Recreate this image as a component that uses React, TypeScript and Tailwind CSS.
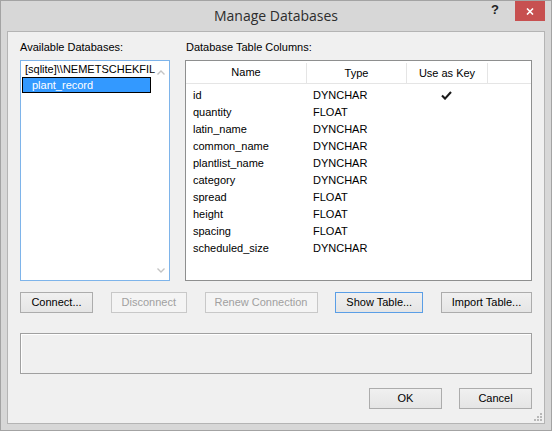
import React from 'react';

type Column = { name: string; type: string; key?: boolean };

const columns: Column[] = [
  { name: 'id', type: 'DYNCHAR', key: true },
  { name: 'quantity', type: 'FLOAT' },
  { name: 'latin_name', type: 'DYNCHAR' },
  { name: 'common_name', type: 'DYNCHAR' },
  { name: 'plantlist_name', type: 'DYNCHAR' },
  { name: 'category', type: 'DYNCHAR' },
  { name: 'spread', type: 'FLOAT' },
  { name: 'height', type: 'FLOAT' },
  { name: 'spacing', type: 'FLOAT' },
  { name: 'scheduled_size', type: 'DYNCHAR' },
];

const Chevron = ({ down }: { down?: boolean }) => (
  <svg width="8" height="5" viewBox="0 0 8 5" className={down ? 'rotate-180' : ''}>
    <path d="M0.5 4.5 L4 1 L7.5 4.5" fill="none" stroke="#c4c4c4" strokeWidth="1.4" />
  </svg>
);

const Check = () => (
  <svg width="11" height="9" viewBox="0 0 11 9">
    <path d="M1 4.6 L4 7.6 L10 1" fill="none" stroke="#1a1a1a" strokeWidth="2.1" />
  </svg>
);

const SizeGrip = () => (
  <svg width="9" height="9" viewBox="0 0 9 9">
    <rect x="6" y="0" width="2" height="2" fill="#b8b8b8" />
    <rect x="3" y="3" width="2" height="2" fill="#b8b8b8" />
    <rect x="6" y="3" width="2" height="2" fill="#b8b8b8" />
    <rect x="0" y="6" width="2" height="2" fill="#b8b8b8" />
    <rect x="3" y="6" width="2" height="2" fill="#b8b8b8" />
    <rect x="6" y="6" width="2" height="2" fill="#b8b8b8" />
  </svg>
);

const Button = ({
  label,
  width,
  disabled,
  focused,
}: {
  label: string;
  width: string;
  disabled?: boolean;
  focused?: boolean;
}) => {
  let cls = 'border-[#acacac] bg-gradient-to-b from-[#f0f0f0] to-[#e5e5e5] text-black';
  if (disabled) cls = 'border-[#c8c8c8] bg-[#f4f4f4] text-[#a0a0a0]';
  if (focused) cls = 'border-[#5a9ee6] bg-gradient-to-b from-[#f0f0f0] to-[#e5e5e5] text-black';
  return (
    <div className={`${width} h-[21px] border flex items-center justify-center ${cls}`}>
      {label}
    </div>
  );
};

const App = () => {
  return (
    <div className="w-[552px] h-[431px] bg-[#d7d7d7] border border-[#a3a3a3] flex flex-col font-['Liberation_Sans',Arial,sans-serif] text-[11px] text-black">
      {/* title bar */}
      <div className="h-[30px] grid grid-cols-[1fr_auto_1fr]">
        <div />
        <div className="pt-[4px] font-['Open_Sans',sans-serif] text-[14px] text-[#2d2d2d]">Manage Databases</div>
        <div className="flex justify-end items-start pr-[6px]">
          <div className="mt-[2px] mr-[16px] font-['Liberation_Sans',sans-serif] font-bold text-[13px] text-[#222] leading-none">?</div>
          <div className="w-[30px] h-[20px] bg-[#c75050] flex items-center justify-center">
            <svg width="8" height="7" viewBox="0 0 8 7">
              <path d="M1 0.5 L7 6.5 M7 0.5 L1 6.5" stroke="#fff" strokeWidth="1.6" />
            </svg>
          </div>
        </div>
      </div>

      {/* client area */}
      <div className="relative mx-[6px] mb-[6px] flex-1 border border-[#b4b4b4] bg-[#f0f0f0] px-[12px] pt-[9px] flex flex-col">
        <div className="grid grid-cols-[150px_347px] gap-x-[15px]">
          <div className="h-[13px] leading-[13px] mb-[6px]">Available Databases:</div>
          <div className="h-[13px] leading-[13px] mb-[6px] pl-[1px]">Database Table Columns:</div>

          {/* database list */}
          <div className="h-[221px] border border-[#7eb4ea] bg-white flex">
            <div className="flex-1 min-w-0">
              <div className="h-[16px] leading-[16px] pl-[4px] whitespace-nowrap">
                [sqlite]\\NEMETSCHEKFIL
              </div>
              <div className="ml-[1px] mr-[1px] h-[16px] leading-[14px] border border-black bg-[#3399ff] text-white pl-[9px] whitespace-nowrap">
                plant_record
              </div>
            </div>
            <div className="w-[17px] flex flex-col items-center justify-between pt-[9px] pb-[7px]">
              <Chevron />
              <Chevron down />
            </div>
          </div>

          {/* columns table */}
          <div className="h-[221px] border border-[#8e8f8f] bg-white flex flex-col">
            <div className="h-[23px] flex border-b border-[#e5e5e5]">
              <div className="w-[120px] flex items-center justify-center pt-[1px]">Name</div>
              <div className="w-[100px] flex items-center justify-center border-l border-[#e5e5e5] mt-[2px]">Type</div>
              <div className="w-[81px] flex items-center justify-center border-l border-[#e5e5e5] mt-[2px]">Use as Key</div>
              <div className="flex-1 border-l border-[#e5e5e5] mt-[2px]" />
            </div>
            <div className="pt-[3px]">
              {columns.map((c) => (
                <div key={c.name} className="h-[17px] flex items-center">
                  <div className="w-[120px] pl-[7px]">{c.name}</div>
                  <div className="w-[100px] pl-[7px]">{c.type}</div>
                  <div className="w-[81px] flex justify-center">{c.key ? <Check /> : null}</div>
                </div>
              ))}
            </div>
          </div>
        </div>

        {/* action buttons */}
        <div className="mt-[11px] flex justify-between">
          <Button label="Connect..." width="w-[73px]" />
          <Button label="Disconnect" width="w-[76px]" disabled />
          <Button label="Renew Connection" width="w-[113px]" disabled />
          <Button label="Show Table..." width="w-[88px]" focused />
          <Button label="Import Table..." width="w-[91px]" />
        </div>

        {/* status box */}
        <div className="mt-[20px] h-[41px] border border-[#a0a0a0] shadow-[inset_1px_1px_0_#ffffff]" />

        {/* dialog buttons */}
        <div className="mt-[14px] flex justify-end gap-[17px]">
          <Button label="OK" width="w-[73px]" />
          <Button label="Cancel" width="w-[73px]" />
        </div>

        <div className="absolute right-[1px] bottom-[1px]">
          <SizeGrip />
        </div>
      </div>
    </div>
  );
};

export default App;
